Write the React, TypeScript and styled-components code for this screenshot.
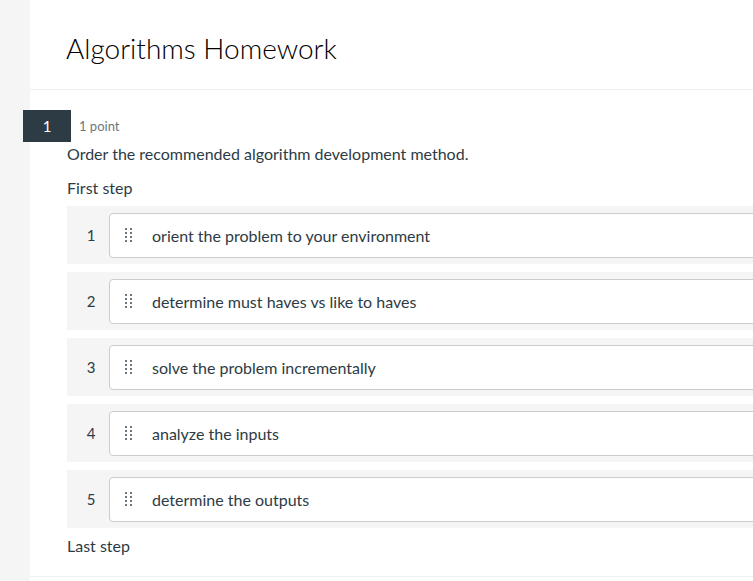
import styled, { createGlobalStyle } from "styled-components";

const Global = createGlobalStyle`
  html, body {
    margin: 0;
    padding: 0;
    background: #f5f5f5;
    overflow: hidden;
  }
  body {
    font-family: Lato, "Noto Sans", sans-serif;
    color: #2d3b45;
  }
`;

const Page = styled.div`
  display: flex;
  min-height: 581px;
  width: 900px;
`;

const Gutter = styled.div`
  width: 30px;
  flex-shrink: 0;
  background: #f5f5f5;
`;

const Panel = styled.div`
  flex: 1;
  background: #fff;
`;

const TitleBar = styled.div`
  padding: 28px 36px 0;
  height: 61px;
  border-bottom: 1px solid #eef0f1;
`;

const Title = styled.h1`
  margin: 0;
  font-weight: 300;
  font-size: 28px;
  line-height: 40px;
  color: #000;
`;

const Question = styled.div`
  padding: 20px 0 18px 37px;
  border-bottom: 1px solid #eef0f1;
`;

const Head = styled.div`
  display: flex;
  align-items: center;
  height: 32px;
  margin-left: -44px;
`;

const Badge = styled.div`
  width: 48px;
  height: 32px;
  background: #2d3b45;
  color: #fff;
  font-size: 15px;
  display: flex;
  align-items: center;
  justify-content: center;
`;

const Points = styled.span`
  margin-left: 8px;
  font-size: 13px;
  color: #6b7780;
`;

const Prompt = styled.p`
  margin: 0;
  font-size: 16px;
  line-height: 24px;
`;

const Label = styled.div<{ top: number }>`
  font-size: 16px;
  line-height: 24px;
  margin-top: ${(p) => p.top}px;
`;

const List = styled.div`
  display: flex;
  flex-direction: column;
  gap: 8px;
  margin: 6px 0 6px;
`;

const Row = styled.div`
  display: flex;
  align-items: center;
  height: 58px;
  background: #f5f5f5;
`;

const Num = styled.div`
  width: 42px;
  padding-left: 6px;
  box-sizing: border-box;
  text-align: center;
  font-size: 15px;
`;

const Item = styled.div`
  flex: 1;
  height: 45px;
  box-sizing: border-box;
  background: #fff;
  border: 1px solid #c7cdd1;
  border-radius: 4px;
  display: flex;
  align-items: center;
  padding-left: 14px;
  font-size: 16px;
`;

const Handle = styled.svg`
  width: 8px;
  height: 16px;
  margin-right: 20px;
  flex-shrink: 0;
`;

const Grip = () => (
  <Handle viewBox="0 0 8 16">
    {[0, 1, 2, 3].map((r) =>
      [0, 1].map((c) => (
        <rect key={`${r}-${c}`} x={1 + c * 5} y={1 + r * 4} width="2" height="2" fill="#6b7780" />
      ))
    )}
  </Handle>
);

const steps = [
  "orient the problem to your environment",
  "determine must haves vs like to haves",
  "solve the problem incrementally",
  "analyze the inputs",
  "determine the outputs",
];

export default function App() {
  return (
    <>
      <Global />
      <Page>
        <Gutter />
        <Panel>
          <TitleBar>
            <Title>Algorithms Homework</Title>
          </TitleBar>
          <Question>
            <Head>
              <Badge>1</Badge>
              <Points>1 point</Points>
            </Head>
            <Prompt>Order the recommended algorithm development method.</Prompt>
            <Label top={10}>First step</Label>
            <List>
              {steps.map((s, i) => (
                <Row key={s}>
                  <Num>{i + 1}</Num>
                  <Item>
                    <Grip />
                    {s}
                  </Item>
                </Row>
              ))}
            </List>
            <Label top={0}>Last step</Label>
          </Question>
        </Panel>
      </Page>
    </>
  );
}
